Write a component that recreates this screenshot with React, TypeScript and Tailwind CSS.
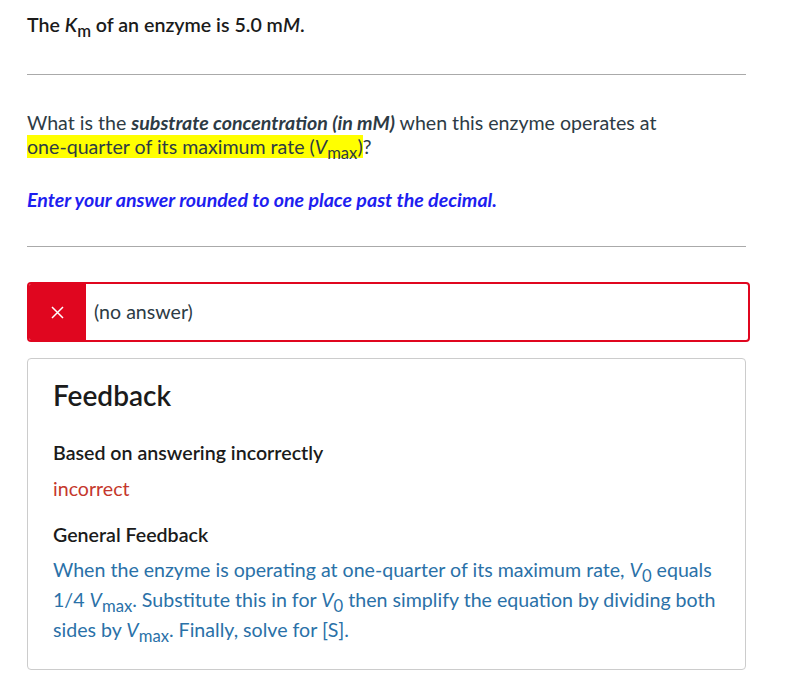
import React from 'react';

const Sub: React.FC<{ children: React.ReactNode }> = ({ children }) => (
  <sub className="not-italic text-[0.85em] relative top-[0.28em] align-baseline">{children}</sub>
);

const App: React.FC = () => {
  return (
    <div className="w-[790px] min-h-[681px] bg-white font-['Lato','Liberation_Sans',sans-serif] text-[#2d3b45]">
      <div className="pl-[27px] pr-[44px] pt-[12px]">
        <p className="text-[19.6px] leading-[26px] font-semibold text-[#1b1b1b]">
          The <i>K</i><Sub>m</Sub> of an enzyme is 5.0 m<i>M</i>.
        </p>
        <hr className="mt-[36px] border-t border-[#aaaaaa]" />

        <p className="mt-[36px] text-[19.6px] leading-[24px]">
          What is the <b className="italic">substrate concentration (in mM)</b> when this enzyme operates at
          <br />
          <span className="bg-[#ffff00]">
            one-quarter of its maximum rate (<i>V</i><Sub>max</Sub>)
          </span>
          ?
        </p>

        <p className="mt-[29px] text-[19.6px] leading-[24px] font-bold italic text-[#1e1ef0]">
          Enter your answer rounded to one place past the decimal.
        </p>
        <hr className="mt-[34px] border-t border-[#aaaaaa]" />

        <div className="mt-[35px] mr-[-4px] h-[60px] flex rounded-[4px] border-2 border-[#e0061f] overflow-hidden">
          <div className="w-[57px] bg-[#e0061f] flex items-center justify-center">
            <svg width="13" height="13" viewBox="0 0 13 13" stroke="white" strokeWidth="1.5" fill="none">
              <path d="M1 1 L12 12 M12 1 L1 12" />
            </svg>
          </div>
          <div className="flex items-center pl-[8px] text-[19.6px]">(no answer)</div>
        </div>

        <div className="mt-[16px] rounded-[4px] border border-[#cccccc] pl-[25px] pr-[20px] pt-[19px] pb-[24px]">
          <h2 className="text-[28px] leading-[34px] font-semibold text-[#1b1b1b]">Feedback</h2>
          <p className="mt-[28px] text-[19.6px] leading-[26px] font-semibold text-[#1b1b1b]">Based on answering incorrectly</p>
          <p className="mt-[10px] text-[19.6px] leading-[26px] text-[#c5372c]">incorrect</p>
          <p className="mt-[20px] text-[19.6px] leading-[26px] font-semibold text-[#1b1b1b]">General Feedback</p>
          <p className="mt-[7px] text-[19.6px] leading-[30px] text-[#2a71a8]">
            When the enzyme is operating at one-quarter of its maximum rate, <i>V</i><Sub>0</Sub> equals 1/4 <i>V</i><Sub>max</Sub>. Substitute this in for <i>V</i><Sub>0</Sub> then simplify the equation by dividing both sides by <i>V</i><Sub>max</Sub>. Finally, solve for [S].
          </p>
        </div>
      </div>
    </div>
  );
};

export default App;
